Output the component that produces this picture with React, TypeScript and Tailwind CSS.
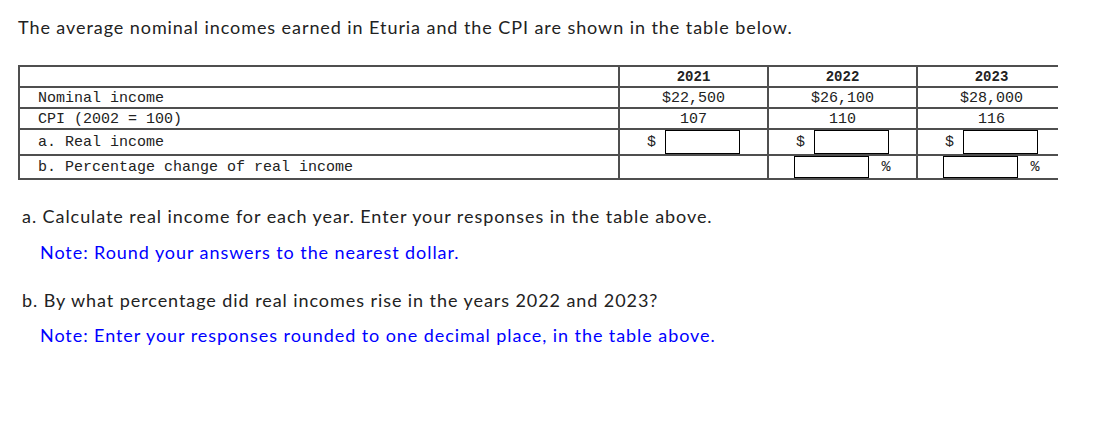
import React from 'react';

const years = [
  { year: '2021', nominal: '$22,500', cpi: '107', pct: false },
  { year: '2022', nominal: '$26,100', cpi: '110', pct: true },
  { year: '2023', nominal: '$28,000', cpi: '116', pct: true },
];

const mono = "font-['Liberation_Mono','DejaVu_Sans_Mono',monospace] text-[15px] text-[#222]";
const cellBorder = 'border-r-2 border-b-2 border-[#4f4f4f]';

const AnswerBox: React.FC<{ h: string }> = ({ h }) => (
  <div className={`w-[75px] ${h} border border-black bg-white`} />
);

const App: React.FC = () => {
  return (
    <div className="w-[1119px] h-[442px] bg-white font-['Lato','Open_Sans',sans-serif] text-[#222] tracking-[0.93px]">
      <p className="pl-[18px] pt-[16px] text-[18px] leading-[22px]">
        The average nominal incomes earned in Eturia and the CPI are shown in the table below.
      </p>

      <div className="ml-[18px] mt-[27px] w-[1040px] overflow-hidden tracking-normal">
        <div className={`w-[1060px] border-t-2 border-l-2 border-[#4f4f4f] ${mono}`}>
          {/* header */}
          <div className="flex h-[21px]">
            <div className={`w-[600px] ${cellBorder}`} />
            {years.map((y) => (
              <div key={y.year} className={`w-[149px] ${cellBorder} flex items-center justify-center pt-[2px] font-bold text-[14px]`}>
                {y.year}
              </div>
            ))}
          </div>
          {/* nominal */}
          <div className="flex h-[21px]">
            <div className={`w-[600px] ${cellBorder} flex items-center pl-[18px] pt-[3px]`}>Nominal income</div>
            {years.map((y) => (
              <div key={y.year} className={`w-[149px] ${cellBorder} flex items-center justify-center pt-[3px]`}>
                {y.nominal}
              </div>
            ))}
          </div>
          {/* cpi */}
          <div className="flex h-[21px]">
            <div className={`w-[600px] ${cellBorder} flex items-center pl-[18px] pt-[3px] whitespace-pre`}>CPI (2002 = 100)</div>
            {years.map((y) => (
              <div key={y.year} className={`w-[149px] ${cellBorder} flex items-center justify-center pt-[3px]`}>
                {y.cpi}
              </div>
            ))}
          </div>
          {/* real income */}
          <div className="flex h-[26px]">
            <div className={`w-[600px] ${cellBorder} flex items-center pl-[18px] pt-[3px]`}>a. Real income</div>
            {years.map((y) => (
              <div key={y.year} className={`w-[149px] ${cellBorder} flex items-center justify-center gap-[9px]`}>
                <span className="pt-[2px]">$</span>
                <AnswerBox h="h-[24px]" />
              </div>
            ))}
          </div>
          {/* percentage */}
          <div className="flex h-[24px]">
            <div className={`w-[600px] ${cellBorder} flex items-center pl-[18px] pt-[3px]`}>b. Percentage change of real income</div>
            {years.map((y) => (
              <div key={y.year} className={`w-[149px] ${cellBorder} flex items-center justify-center gap-[12px]`}>
                {y.pct && (
                  <>
                    <AnswerBox h="h-[22px]" />
                    <span className="pt-[2px]">%</span>
                  </>
                )}
              </div>
            ))}
          </div>
        </div>
      </div>

      <div className="pl-[22px] pt-[25px] text-[18px] leading-[22px]">
        <p>a. Calculate real income for each year. Enter your responses in the table above.</p>
        <p className="pl-[18px] mt-[14px] text-[#0000ff]">Note: Round your answers to the nearest dollar.</p>
        <p className="mt-[26px]">b. By what percentage did real incomes rise in the years 2022 and 2023?</p>
        <p className="pl-[18px] mt-[13px] text-[#0000ff]">Note: Enter your responses rounded to one decimal place, in the table above.</p>
      </div>
    </div>
  );
};

export default App;
